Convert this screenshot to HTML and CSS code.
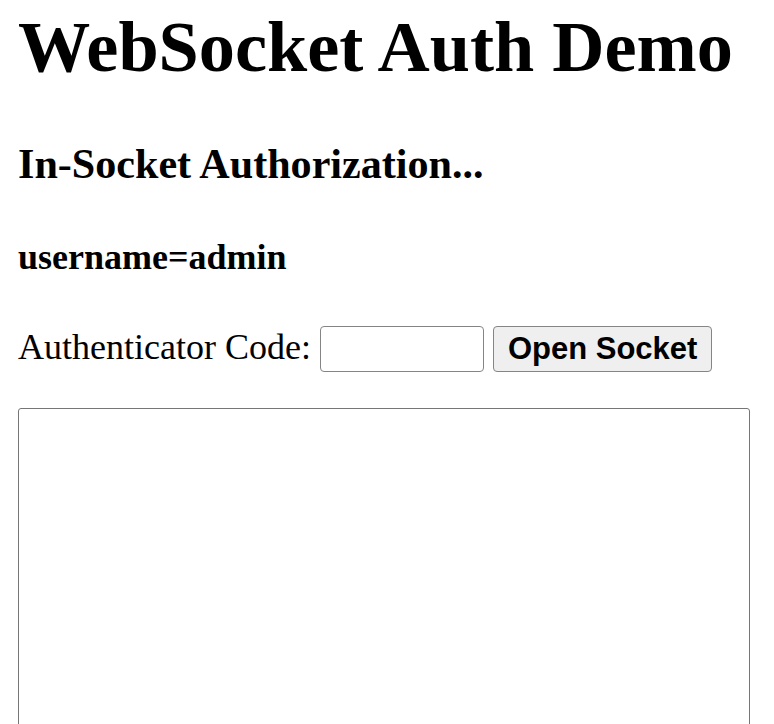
FILE: index.html
```html
<!DOCTYPE html>
<html lang="en">
<head>
<meta charset="utf-8">
<title>WebSocket Auth Demo</title>
<link rel="stylesheet" href="styles.css">
</head>
<body>
<h1 class="title">WebSocket Auth Demo</h1>
<h3 class="subtitle">In-Socket Authorization...</h3>
<h4 class="user">username=admin</h4>
<p class="auth-row">Authenticator Code: <input class="code-input" type="text"> <button class="open-btn" type="button">Open Socket</button></p>
<textarea class="log"></textarea>
</body>
</html>
```

FILE: styles.css
```css
html, body {
  background: #ffffff;
}
body {
  margin: 6px 18px 18px;
  font-family: "Liberation Serif", "Times New Roman", serif;
  font-size: 36px;
  color: #000000;
}
.title {
  font-size: 72.3px;
  font-weight: bold;
  margin: 0 0 50px;
}
.subtitle {
  font-size: 42.12px;
  font-weight: bold;
  margin: 42px 0;
}
.user {
  font-size: 36px;
  font-weight: bold;
  margin: 48px 0;
}
.auth-row {
  margin: 36px 0;
}
.code-input {
  box-sizing: border-box;
  width: 164px;
  height: 46px;
  margin: 0;
  padding: 2px 4px;
  border: 1px solid #858585;
  border-radius: 4px;
  font-family: "Liberation Sans", Arial, sans-serif;
  font-size: 30px;
  background: #ffffff;
}
.open-btn {
  box-sizing: border-box;
  height: 46px;
  margin: 0;
  padding: 0 14px;
  border: 1px solid #858585;
  border-radius: 4px;
  background: #efefef;
  color: #000000;
  font-family: "Liberation Sans", Arial, sans-serif;
  font-weight: bold;
  font-size: 31px;
}
.log {
  display: block;
  box-sizing: border-box;
  width: 732px;
  height: 420px;
  margin: 0;
  border: 1px solid #767676;
  border-radius: 3px;
  resize: none;
  font-family: "Liberation Mono", monospace;
  font-size: 30px;
}
```
